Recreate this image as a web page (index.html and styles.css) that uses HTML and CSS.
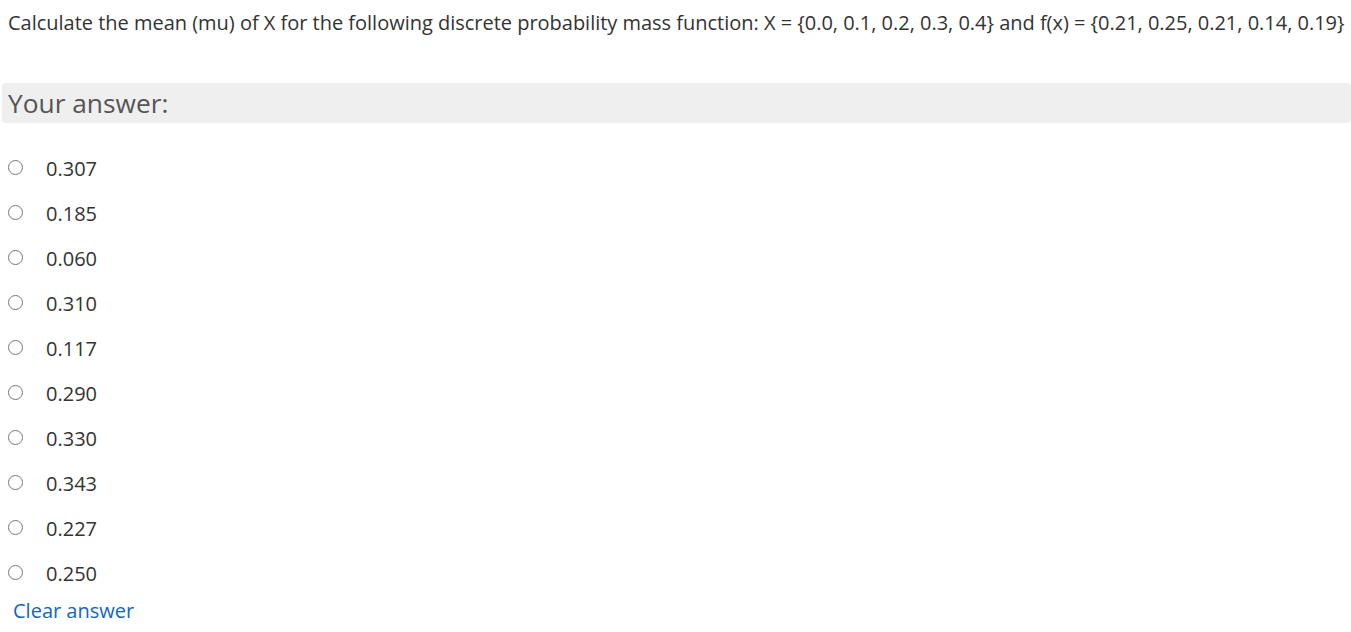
FILE: index.html
```html
<!DOCTYPE html>
<html>
<head>
<meta charset="utf-8">
<link rel="stylesheet" href="styles.css">
</head>
<body>
<div class="question">
  <p class="qtext">Calculate the mean (mu) of X for the following discrete probability mass function: X = {0.0, 0.1, 0.2, 0.3, 0.4} and f(x) = {0.21, 0.25, 0.21, 0.14, 0.19}</p>
  <div class="prompt">Your answer:</div>
  <div class="answers">
    <label class="opt"><span class="radio"></span><span class="val">0.307</span></label>
    <label class="opt"><span class="radio"></span><span class="val">0.185</span></label>
    <label class="opt"><span class="radio"></span><span class="val">0.060</span></label>
    <label class="opt"><span class="radio"></span><span class="val">0.310</span></label>
    <label class="opt"><span class="radio"></span><span class="val">0.117</span></label>
    <label class="opt"><span class="radio"></span><span class="val">0.290</span></label>
    <label class="opt"><span class="radio"></span><span class="val">0.330</span></label>
    <label class="opt"><span class="radio"></span><span class="val">0.343</span></label>
    <label class="opt"><span class="radio"></span><span class="val">0.227</span></label>
    <label class="opt"><span class="radio"></span><span class="val">0.250</span></label>
  </div>
  <a class="clear" href="#">Clear answer</a>
</div>
</body>
</html>
```
FILE: styles.css
```css
html, body { margin: 0; padding: 0; background: #fff; }
body {
  font-family: "Open Sans", "Noto Sans", sans-serif;
  color: #333;
  font-size: 20px;
  overflow: hidden;
}
.question { padding: 0 0 0 2px; }
.qtext {
  margin: 0;
  padding: 10px 0 0 6px;
  line-height: 26px;
  white-space: nowrap;
  letter-spacing: -0.015px;
}
.prompt {
  margin-top: 47px;
  background: #efefef;
  border-radius: 4px;
  height: 40px;
  line-height: 40px;
  padding-left: 6px;
  font-size: 26.3px;
  color: #555;
}
.answers {
  display: flex;
  flex-direction: column;
  gap: 19px;
  margin-top: 33px;
}
.opt {
  display: flex;
  align-items: center;
  height: 26px;
}
.radio {
  width: 15px;
  height: 15px;
  border: 1px solid #777;
  border-radius: 50%;
  box-sizing: border-box;
  margin: -3px 23px 0 6px;
}
.val { line-height: 26px; }
.clear {
  display: inline-block;
  margin: 11px 0 0 11px;
  color: #1565c0;
  text-decoration: none;
  line-height: 26px;
}
```
